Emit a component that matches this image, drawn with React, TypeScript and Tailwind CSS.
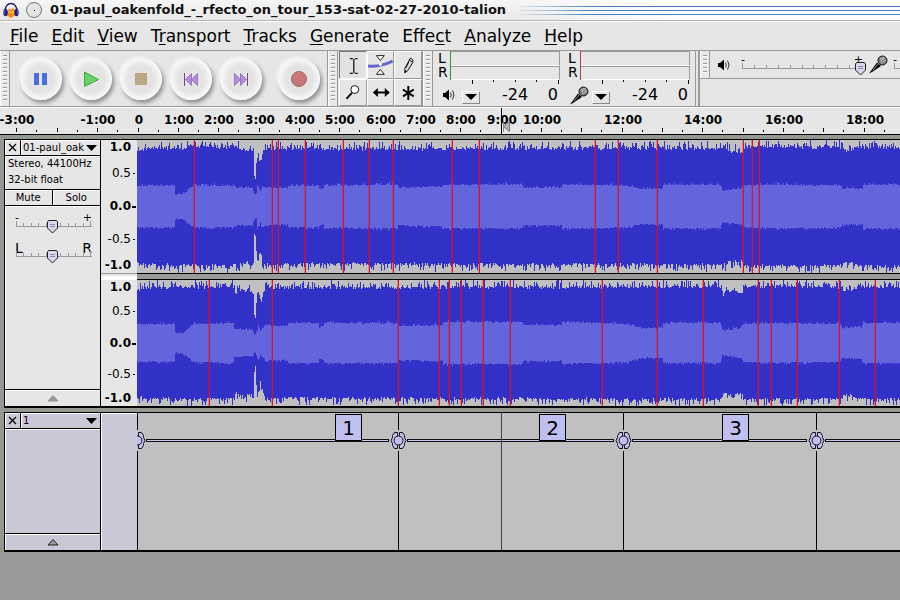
import React, {useEffect, useMemo, useState} from "react";
import clsx from "clsx";

interface MenuEntry {
  before: string
  key: string
  after: string
}

const MENUS: MenuEntry[] = [
  {before: "", key: "F", after: "ile"},
  {before: "", key: "E", after: "dit"},
  {before: "", key: "V", after: "iew"},
  {before: "T", key: "r", after: "ansport"},
  {before: "", key: "T", after: "racks"},
  {before: "", key: "G", after: "enerate"},
  {before: "Effe", key: "c", after: "t"},
  {before: "", key: "A", after: "nalyze"},
  {before: "", key: "H", after: "elp"},
]

// timeline scale
const ZERO_X = 138
const PX_PER_MINUTE = 40.35

// the drawn part of a clip, in pixels
const CLIP_WIDTH = 1800

// [x, half height], linear in between
type Envelope = [number, number][]

const LEFT_PEAK: Envelope = [
  [0, 57], [14, 59], [96, 60], [110, 57], [116, 56], [117, 28], [118, 28], [119, 44], [121, 53], [122, 48], [124, 48], [126, 58],
  [590, 59], [591, 56], [605, 55], [606, 60], [702, 60], [708, 56], [714, 57], [720, 60], [CLIP_WIDTH, 60],
]
const RIGHT_PEAK: Envelope = [
  [0, 53], [6, 56], [95, 57], [98, 50], [103, 54], [114, 52], [116, 51], [117, 25], [118, 25], [119, 42], [120, 50], [122, 50], [123, 40],
  [126, 50], [129, 56], [584, 57], [585, 49], [590, 52], [605, 51], [606, 57], [700, 57], [706, 53], [714, 53], [724, 57], [CLIP_WIDTH, 57],
]
const LEFT_RMS: Envelope = [
  [0, 21], [37, 21], [38, 12], [46, 13], [56, 21], [96, 21], [97, 19], [115, 19], [117, 12], [119, 12], [120, 21], [123, 16], [125, 20],
  [129, 19], [150, 18], [151, 21], [181, 21], [182, 18], [186, 18], [187, 21], [260, 22], [261, 19], [305, 20], [306, 22], [385, 22],
  [386, 19], [424, 19], [425, 22], [490, 21], [503, 18], [525, 18], [526, 22], [583, 22], [585, 16], [604, 18], [606, 21], [640, 22],
  [704, 21], [705, 18], [725, 18], [726, 22], [CLIP_WIDTH, 22],
]
const RIGHT_RMS: Envelope = [
  [0, 19], [37, 19], [38, 10], [46, 10], [56, 19], [96, 20], [97, 14], [115, 13], [117, 9], [119, 10], [121, 17], [123, 12], [129, 18],
  [150, 17], [151, 20], [181, 20], [182, 16], [186, 17], [187, 20], [260, 20], [261, 17], [305, 18], [306, 21], [385, 21], [386, 18],
  [424, 18], [425, 21], [462, 20], [490, 19], [503, 15], [525, 15], [526, 20], [583, 20], [585, 12], [604, 15], [606, 19], [640, 20],
  [702, 19], [705, 15], [724, 16], [726, 20], [CLIP_WIDTH, 20],
]

const LEFT_CLIPPING = [194, 272, 278, 305, 343, 369, 393, 452, 479, 595, 618, 657, 743, 752, 759]
const RIGHT_CLIPPING = [209, 272, 398, 439, 449, 461, 483, 510, 602, 657, 703, 758, 771, 797, 839, 875]

const LABEL_EDGES = [0, 261, 486, 679]
const LABELS = [{text: "1", x: 198}, {text: "2", x: 402}, {text: "3", x: 585}]

function valueAt(points: Envelope, x: number) {
  for (let i = 1; i < points.length; i++) {
    const [x0, y0] = points[i - 1]
    const [x1, y1] = points[i]
    if (x <= x1) return y0 + (y1 - y0) * (x - x0) / (x1 - x0)
  }
  return points[points.length - 1][1]
}

function createRandom(seed: number) {
  let state = seed
  return () => {
    state = (state * 1664525 + 1013904223) % 4294967296
    return state / 4294967296
  }
}

function columns(points: Envelope, middle: number, noise: number, seed: number) {
  const random = createRandom(seed)
  const spread = () => {
    const r = random()
    return (r * r * r * 1.5 + random() * 0.5 - 0.5) * noise
  }
  let d = ""
  for (let x = 0; x < CLIP_WIDTH; x++) {
    const half = valueAt(points, x)
    d += `M${x + 0.5} ${Math.round(middle - half - spread())}V${Math.round(middle + half + spread())}`
  }
  return d
}

function useWindowWidth() {
  const [width, setWidth] = useState(window.innerWidth)

  useEffect(() => {
    const update = () => setWidth(window.innerWidth)
    window.addEventListener("resize", update)
    return () => window.removeEventListener("resize", update)
  }, [])

  return width
}

function Waveform({height, peak, rms, clipping, seed}: {
  height: number
  peak: Envelope
  rms: Envelope
  clipping: number[]
  seed: number
}) {
  const peakPath = useMemo(() => columns(peak, height / 2, 5, seed), [peak, height, seed])
  const rmsPath = useMemo(() => columns(rms, height / 2, 1.5, seed + 7), [rms, height, seed])

  return (
    <svg className="block w-full bg-[#c0c0c0]" height={height} shapeRendering="crispEdges" aria-hidden="true">
      <path d={peakPath} stroke="#3232c8"/>
      <path d={rmsPath} stroke="#6464dc"/>
      {clipping.map((x) => (
        <g key={x} fill="#dc1028">
          <rect x={x - 138} y="0" width="2" height={height} opacity=".3"/>
          <rect x={x - 137} y="0" width="1" height={height}/>
        </g>
      ))}
    </svg>
  )
}

function VerticalScale({height, marks}: { height: number, marks: number[] }) {
  return (
    <svg className="block w-9 font-['DejaVu_Sans']" height={height}>
      {["1.0", "0.5", "0.0", "-0.5", "-1.0"].map((text, i) => {
        const bold = i % 2 === 0
        return (
          <g key={text}>
            <text x="30" y={marks[i] + 4} textAnchor="end" fontSize="12" fontWeight={bold ? 700 : 400}>{text}</text>
            {i > 0 && i < 4 && (
              <rect x={bold ? 31 : 32} y={marks[i]} width={bold ? 4 : 2} height={bold ? 2 : 1}/>
            )}
          </g>
        )
      })}
    </svg>
  )
}

function TimeRuler() {
  const width = useWindowWidth()
  const count = Math.ceil((width - ZERO_X) / PX_PER_MINUTE) + 3
  const minutes = Array.from({length: count}, (_, i) => i - 3)

  return (
    <div className="h-7 border-t border-b border-t-white border-b-black bg-[#e6e6e6]">
      <svg className="block w-full font-['DejaVu_Sans']" height="26">
        {minutes.map((m) => {
          const x = Math.floor(ZERO_X + m * PX_PER_MINUTE)
          // past ten minutes only every other label has room
          const labelled = m !== -2 && (m < 11 || m % 2 === 0)
          return (
            <g key={m}>
              {labelled && (
                <text x={x + 1} y="16" textAnchor="middle" fontSize="12" fontWeight="700">
                  {m === 0 ? "0" : `${m}:00`}
                </text>
              )}
              <rect x={x} y="20" width="1" height="4"/>
              <rect x={x + 20} y="22" width="1" height="2"/>
            </g>
          )
        })}
        <rect x="501" y="0" width="1" height="26"/>
        <path d="M509.5 13.5v10l-6-5z" fill="#b4b4b4" stroke="#777"/>
        <rect x="503" y="14" width="1" height="10" fill="#888"/>
      </svg>
    </div>
  )
}

function Logo() {
  return (
    <svg width="18" height="18" viewBox="0 0 18 18" aria-hidden="true">
      <path d="M3.500 10C2 0 16 0 14.500 10" fill="none" stroke="#22226e" strokeWidth="1.500"/>
      <path d="M4 14V9l2 1 1-3 2 2 2-3 1 3 2 0v5l-5 3z" fill="#f58a1c"/>
      <path d="M6 12l2-2 1 2 2-2 1 3" fill="none" stroke="#ffd23c"/>
      <ellipse cx="3.500" cy="11.500" rx="2.200" ry="3.800" fill="#1c1c8c"/>
      <ellipse cx="14.500" cy="11.500" rx="2.200" ry="3.800" fill="#1c1c8c"/>
      <path d="M2.500 9v4M15.500 9v4" stroke="#5a5ac8"/>
    </svg>
  )
}

function TitleBar() {
  return (
    <header className="flex h-[22px] items-start gap-[7px] border-b border-white bg-linear-to-b from-[#f6f6f6] to-[#e8e8e8] pl-[2px] shadow-[inset_0_-1px_0_#b4b4b4]">
      <div className="flex h-5 shrink-0 items-center gap-[6px]">
        <Logo/>
        <button type="button" aria-label="Window menu"
                className="flex size-4 items-center justify-center rounded-full border border-[#777] bg-[#e4e4e0]">
          <span className="size-px bg-black"/>
        </button>
      </div>
      <h1 className="pl-px text-[13px] leading-5 font-bold whitespace-nowrap text-[#111]">
        01-paul_oakenfold_-_rfecto_on_tour_153-sat-02-27-2010-talion
      </h1>
      <div className="flex h-5 grow flex-col gap-[3px] bg-linear-to-r from-transparent to-white to-40% pt-[6px]">
        <div className="h-px bg-linear-to-r from-transparent to-[#4682be] to-20%"/>
        <div className="h-px bg-linear-to-r from-transparent to-[#4682be] to-20%"/>
        <div className="h-px bg-linear-to-r from-transparent to-[#4682be] to-20%"/>
      </div>
    </header>
  )
}

function Grip({className}: { className?: string }) {
  return (
    <div className={clsx("w-[10px] shrink-0 border-r border-l border-r-[#999] border-l-white bg-[#e9e9e9] px-[2px] py-1", className)}>
      <div className="h-full bg-[repeating-linear-gradient(to_bottom,#999_0_1px,#fff_1px_2px,#e6e6e6_2px_4px)]"/>
    </div>
  )
}

function RoundButton({label, children}: { label: string, children: React.ReactNode }) {
  return (
    <button type="button" aria-label={label}
            className="flex size-[42px] shrink-0 items-center justify-center rounded-full bg-radial from-[#e4e4e4] from-45% to-[#f6f6f6] to-65% shadow-[2px_3px_4px_#8c8c8c,-1px_-1px_3px_#fff]">
      <svg width="18" height="18" viewBox="0 0 18 18" aria-hidden="true">{children}</svg>
    </button>
  )
}

function TransportBar() {
  return (
    <div className="flex w-[318px] shrink-0 items-center gap-2 border-r border-[#999] pl-[10px]">
      <RoundButton label="Pause">
        <path d="M2 3h5v12H2zM10 3h5v12h-5z" fill="#4a6ee0"/>
      </RoundButton>
      <RoundButton label="Play">
        <path d="M2.500 2v14.500L16.500 9.500z" fill="#64d264" stroke="#40a840"/>
      </RoundButton>
      <RoundButton label="Stop">
        <path d="M3 3h12v12H3z" fill="#b8a884"/>
      </RoundButton>
      <RoundButton label="Skip to start">
        <path d="M9.500 3.500v12l-6-6zM15.500 3.500v12l-6-6z" fill="#b48cdc" stroke="#8c64b4" strokeWidth=".8"/>
        <path d="M2.500 3v13" stroke="#6e4696"/>
      </RoundButton>
      <RoundButton label="Skip to end">
        <path d="M2.500 3.500v12l6-6zM8.500 3.500v12l6-6z" fill="#b48cdc" stroke="#8c64b4" strokeWidth=".8"/>
        <path d="M15.500 3v13" stroke="#6e4696"/>
      </RoundButton>
      <div className="pl-2">
        <RoundButton label="Record">
          <circle cx="9" cy="9" r="7.500" fill="#c87878" stroke="#a86464"/>
        </RoundButton>
      </div>
    </div>
  )
}

const TOOLS = [
  {
    name: "Selection",
    icon: <path d="M10 6.500h3M15 6.500h3M14 7v14M10 21.500h3M15 21.500h3" stroke="#111" strokeWidth="1.300" fill="none"/>,
  },
  {
    name: "Envelope",
    icon: (
      <>
        <path d="M0 14c10 1 17-1 25-5" stroke="#6464d2" strokeWidth="3" fill="none"/>
        <path d="M8.500 3.500h8l-4 5zM8.500 22.500h8l-4-5z" fill="#fff" stroke="#222"/>
        <circle cx="12.500" cy="12.500" r="1.500" fill="#fff"/>
      </>
    ),
  },
  {
    name: "Draw",
    icon: (
      <>
        <path d="M15.500 6l2.500 1.500v3l-5 8-3 2.500v-4.500z" fill="#ddd" stroke="#111"/>
        <path d="M14.500 8l3 2M14 10l-3 6" stroke="#111"/>
        <path d="M10 18l2 1.500-2 1.500z"/>
      </>
    ),
  },
  {
    name: "Zoom",
    icon: (
      <>
        <circle cx="15" cy="10.500" r="4" fill="#fff" stroke="#111"/>
        <path d="M12 14l-5.500 6" stroke="#111" strokeWidth="2"/>
      </>
    ),
  },
  {
    name: "Time shift",
    icon: (
      <>
        <path d="M6 13.500h15" stroke="#000" strokeWidth="2"/>
        <path d="M10 9v9l-5-4.500zM17 9v9l5-4.500z"/>
      </>
    ),
  },
  {
    name: "Multi",
    icon: <path d="M13.500 7v14M8 10.500l11 7M19 10.500l-11 7" stroke="#000" strokeWidth="2" fill="none"/>,
  },
]

function ToolGrid() {
  const [active, setActive] = useState("Selection")

  return (
    <div className="grid w-[85px] shrink-0 grid-cols-3 grid-rows-2 border-r border-[#999] pl-px">
      {TOOLS.map((tool) => (
        <button
          key={tool.name}
          type="button"
          aria-label={tool.name}
          aria-pressed={active === tool.name}
          onClick={() => setActive(tool.name)}
          className={clsx(
            "flex items-center justify-center border",
            active === tool.name
              ? "border-t-[#777] border-r-white border-b-white border-l-[#777] bg-[#e2e2e2]"
              : "border-t-white border-r-[#999] border-b-[#999] border-l-white",
          )}
        >
          <svg width="26" height="26" viewBox="0 0 26 26" aria-hidden="true">{tool.icon}</svg>
        </button>
      ))}
    </div>
  )
}

function SpeakerIcon() {
  return (
    <svg className="shrink-0" width="13" height="14" viewBox="0 0 13 14" aria-hidden="true">
      <path d="M0 5h2l4-3.500v11L2 9H0z"/>
      <path d="M7.500 4.500q1.500 2.500 0 5M9.500 2.500q3 4.500 0 9" fill="none" stroke="#333"/>
    </svg>
  )
}

function MicIcon() {
  return (
    <svg className="shrink-0" width="19" height="19" viewBox="0 0 19 19" aria-hidden="true">
      <path d="M0 18.500L8 7.500l4 3.500-9 6z"/>
      <path d="M4 15l5-6" stroke="#999"/>
      <circle cx="13.500" cy="5.500" r="4.500" fill="#777" stroke="#111"/>
      <path d="M11 4l4-2M11 6l5-3M12 8l5-3" stroke="#ddd" strokeWidth=".8"/>
    </svg>
  )
}

function Meter({kind}: { kind: "output" | "input" }) {
  const edge = kind === "output" ? "border-l-[#28a028]" : "border-l-[#b43c46]"

  return (
    <div className="flex w-[130px] shrink-0 flex-col">
      <div className="flex h-[29px]">
        <div className="w-[17px] pl-[5px] text-[14px] leading-[14px]">
          <div>L</div>
          <div>R</div>
        </div>
        <div className={clsx("flex w-[110px] flex-col border-l", edge)}>
          <div className="h-[15px] border-t border-r border-[#999] border-b border-b-white"/>
          <div className="h-[14px] border-t border-r border-[#999] border-b border-b-white"/>
        </div>
      </div>
      <svg className="ml-[17px] block" width="110" height="4" shapeRendering="crispEdges" aria-hidden="true">
        {[22, 43, 65, 86, 108].map((x, i) => (
          <rect key={x} x={x} y="0" width="1" height={i % 4 === 0 ? 4 : 2}/>
        ))}
      </svg>
      <div className="flex h-[22px] items-center">
        <div className="flex w-[29px] justify-center pl-1">
          {kind === "output" ? <SpeakerIcon/> : <MicIcon/>}
        </div>
        <button type="button" aria-label={`${kind} meter options`}
                className="mt-1 flex h-[13px] w-[18px] items-center justify-center border border-t-white border-r-[#888] border-b-[#888] border-l-white">
          <svg width="12" height="6" aria-hidden="true"><path d="M0 0h12L6 6z"/></svg>
        </button>
        <div className="flex w-[78px] justify-between pl-[22px] text-[16px] leading-5">
          <span>-24</span>
          <span>0</span>
        </div>
      </div>
    </div>
  )
}

function Slider({label, initial, span, low, high, big}: {
  label: string
  initial: number
  span: number
  low?: string
  high?: string
  big?: boolean
}) {
  const [value, setValue] = useState(initial)
  const ticks = Array.from({length: 11}, (_, i) => Math.round(i * (span - 2) / 10))
  const thumb = Math.round(value / 100 * (span - 2)) + 6
  const baseline = big ? 13 : 11

  return (
    <div className="relative shrink-0">
      <svg className="block" width={span + 12} height="26" aria-hidden="true">
        <text x="5" y={baseline} fontSize={big ? 14 : 11}>{low}</text>
        {high && <text x={span + 6} y={baseline} textAnchor="end" fontSize={big ? 14 : 11}>{high}</text>}
        <g shapeRendering="crispEdges" fill="#999">
          <rect x="6" y="16" width={span} height="1"/>
          {ticks.map((x, i) => (
            <rect key={x} x={x + 6} y={i % 10 === 0 ? 11 : 13} width="1" height={i % 10 === 0 ? 5 : 3}/>
          ))}
        </g>
        <g transform={`translate(${thumb} 10)`}>
          <path d="M-3.500 .5h8l1 1.500v6l-5 5-5-5V2z" fill="#d8d8ee" stroke="#222"/>
          <path d="M-2 4.500h5M-2 6.500h5" stroke="#8888aa"/>
        </g>
      </svg>
      <input
        type="range"
        aria-label={label}
        value={value}
        onChange={(e) => setValue(Number(e.target.value))}
        className="absolute inset-0 size-full cursor-pointer opacity-0"
      />
    </div>
  )
}

function MixerBar() {
  return (
    <div className="flex grow flex-col overflow-hidden border-l-2 border-[#999]">
      <div className="flex h-7 items-center border-b border-[#999]">
        <Grip className="h-full"/>
        <div className="flex w-[26px] shrink-0 pl-2"><SpeakerIcon/></div>
        <Slider label="Output volume" initial={99} span={121} low="-" high="+"/>
        <MicIcon/>
        <Slider label="Input volume" initial={60} span={121} low="-"/>
      </div>
    </div>
  )
}

function PanelTitle({name, tinted}: { name: string, tinted?: boolean }) {
  return (
    <div className={clsx("flex h-4 shrink-0 border-b border-black text-[10px] leading-[14px]", tinted ? "bg-[#c8c8d6]" : "bg-[#e6e6e6]")}>
      <button type="button" aria-label="Close track"
              className="flex w-4 shrink-0 items-center justify-center border-r border-black shadow-[inset_1px_1px_0_#fff]">
        <svg width="9" height="9" aria-hidden="true"><path d="M1 1l7 7M8 1L1 8" stroke="#000" strokeWidth="1.300"/></svg>
      </button>
      <button type="button" className="flex grow items-center justify-between pr-[3px] pl-[2px] shadow-[inset_1px_1px_0_#fff]">
        <span>{name}</span>
        <svg width="11" height="6" aria-hidden="true"><path d="M0 0h11L5.500 6z"/></svg>
      </button>
    </div>
  )
}

function CollapseButton({tinted}: { tinted?: boolean }) {
  return (
    <button type="button" aria-label="Collapse track"
            className="flex h-[17px] shrink-0 items-center justify-center border-t border-black shadow-[inset_1px_1px_0_#fff]">
      <svg width="12" height="7" aria-hidden="true">
        <path d="M6 .5L11 6H1z" fill="#999" stroke={tinted ? "#222" : "#999"}/>
      </svg>
    </button>
  )
}

function AudioTrack() {
  return (
    <section className="ml-1 flex border-t border-b-2 border-l border-black bg-[#e6e6e6]">
      <div className="flex w-24 shrink-0 flex-col border-r border-black">
        <PanelTitle name="01-paul_oak"/>
        <div className="h-[34px] border-b border-black pl-[3px] text-[10px] leading-4 whitespace-nowrap shadow-[inset_1px_1px_0_#fff]">
          <p>Stereo, 44100Hz</p>
          <p>32-bit float</p>
        </div>
        <div className="grid h-4 grid-cols-2 border-b border-black text-[10px] leading-[14px]">
          <button type="button" className="border-r border-black shadow-[inset_1px_1px_0_#fff]">Mute</button>
          <button type="button" className="shadow-[inset_1px_1px_0_#fff]">Solo</button>
        </div>
        <div className="flex grow flex-col gap-1 pt-1 pl-[5px] shadow-[inset_1px_1px_0_#fff]">
          <Slider label="Gain" initial={48} span={76} low="-" high="+"/>
          <Slider label="Pan" initial={48} span={76} low="L" high="R" big/>
        </div>
        <CollapseButton/>
      </div>
      <div className="flex w-9 shrink-0 flex-col justify-between">
        <VerticalScale height={133} marks={[7, 33, 66, 99, 125]}/>
        <div className="h-[7px] border-t border-b-4 border-t-[#999] border-b-white"/>
        <VerticalScale height={126} marks={[7, 31, 63, 94, 118]}/>
      </div>
      <div className="min-w-0 grow">
        <Waveform height={133} peak={LEFT_PEAK} rms={LEFT_RMS} clipping={LEFT_CLIPPING} seed={11}/>
        <div className="h-[7px] border-y border-black bg-[#999]"/>
        <Waveform height={126} peak={RIGHT_PEAK} rms={RIGHT_RMS} clipping={RIGHT_CLIPPING} seed={29}/>
      </div>
    </section>
  )
}

function LabelHandle({x}: { x: number }) {
  return (
    <g transform={`translate(${x} 27)`} fill="#c0c0f0" stroke="#111">
      <path d="M-.5 -7.500h-3l-2 3v2l-1.500 3 1.500 3v2l2 3h3v-3l-2-2v-6l2-2z"/>
      <path d="M1.500 -7.500h3l2 3v2l1.500 3-1.500 3v2l-2 3h-3v-3l2-2v-6l-2-2z"/>
      <circle cx=".5" cy=".5" r="4.500"/>
    </g>
  )
}

function LabelTrack() {
  return (
    <section className="mt-1 ml-1 flex h-[140px] border-t border-b-2 border-l border-black bg-[#c8c8d6]">
      <div className="flex w-24 shrink-0 flex-col border-r border-black">
        <PanelTitle name="1" tinted/>
        <div className="grow shadow-[inset_1px_1px_0_#fff]"/>
        <CollapseButton tinted/>
      </div>
      <div className="w-9 shrink-0 border-t border-l border-white"/>
      <div className="relative min-w-0 grow bg-[#c0c0c0]">
        <svg className="block size-full" aria-hidden="true">
          <g shapeRendering="crispEdges">
            {LABEL_EDGES.map((x, i) => {
              const end = i + 1 < LABEL_EDGES.length ? LABEL_EDGES[i + 1] - 9 : CLIP_WIDTH
              return (
                <g key={x}>
                  <rect x={x} y="0" width="1" height="17"/>
                  <rect x={x} y="38" width="1" height="99"/>
                  <rect x={x + 9} y="26" width={end - x - 9} height="3" fill="#111"/>
                  <rect x={x + 10} y="27" width={end - x - 11} height="1" fill="#c8c8f0"/>
                </g>
              )
            })}
            <rect x="364" y="0" width="1" height="137" fill="#444"/>
          </g>
          {LABEL_EDGES.map((x) => <LabelHandle key={x} x={x}/>)}
        </svg>
        {LABELS.map((label) => (
          <button
            key={label.text}
            type="button"
            className="absolute top-px flex size-[27px] items-center justify-center border border-black bg-[#c0c0f0] text-[20px] leading-6"
            style={{left: label.x}}
          >
            {label.text}
          </button>
        ))}
      </div>
    </section>
  )
}

export default function App() {
  return (
    <div className="min-h-screen overflow-hidden bg-[#999] font-['DejaVu_Sans',sans-serif] text-black">
      <TitleBar/>
      <nav className="flex h-[29px] items-center gap-[13px] border-b border-[#999] bg-[#e6e6e6] pl-[10px] text-[17px] leading-6">
        {MENUS.map(({before, key, after}) => (
          <button key={before + key + after} type="button">
            {before}<span className="underline underline-offset-2">{key}</span>{after}
          </button>
        ))}
      </nav>
      <div className="flex h-14 border-b border-[#999] bg-[#e6e6e6]">
        <Grip/>
        <TransportBar/>
        <Grip/>
        <ToolGrid/>
        <Grip/>
        <Meter kind="output"/>
        <Meter kind="input"/>
        <div className="mr-[2px] w-[3px] shrink-0 border-r border-[#999]"/>
        <MixerBar/>
      </div>
      <TimeRuler/>
      <main className="bg-[#939990] pt-1">
        <AudioTrack/>
        <LabelTrack/>
      </main>
    </div>
  )
}
